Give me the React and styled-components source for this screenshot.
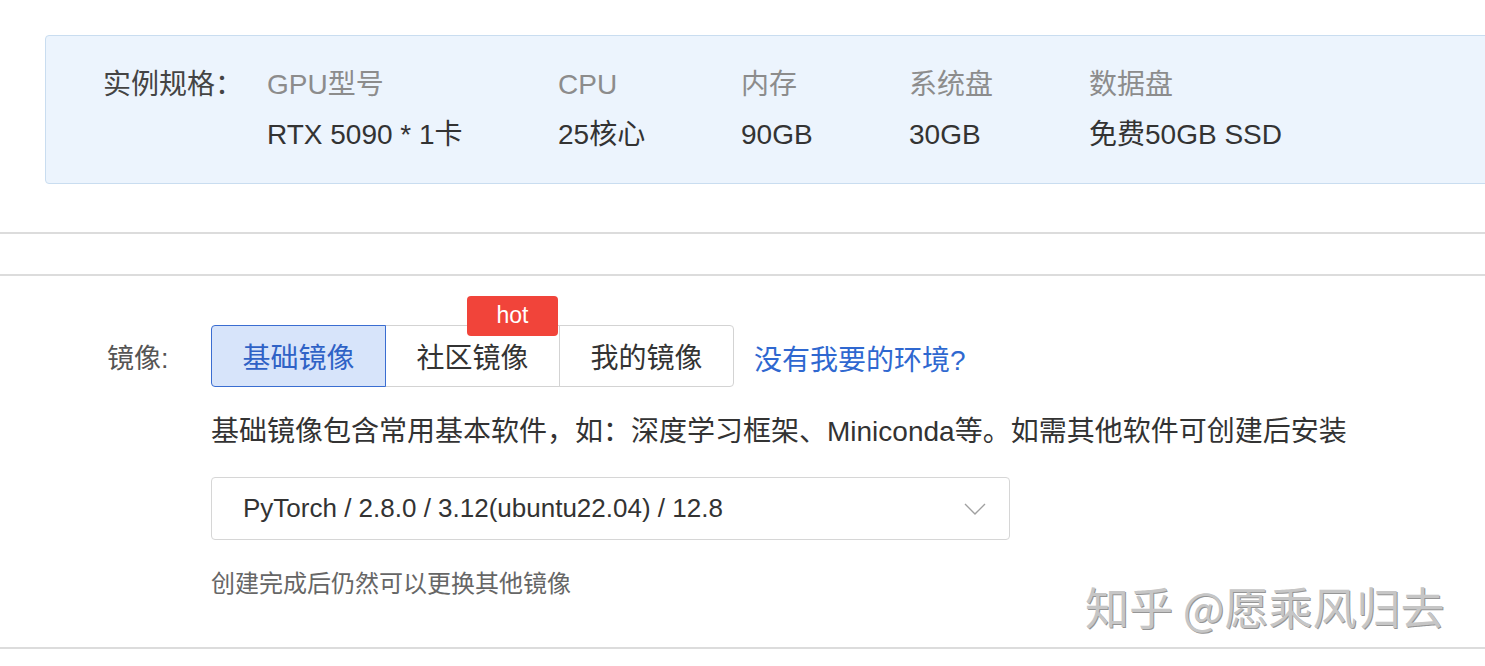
import React from "react";
import styled, { createGlobalStyle } from "styled-components";

const Global = createGlobalStyle`
  html, body { margin: 0; padding: 0; background: #fff; }
  body { font-family: "Liberation Sans", "Noto Sans CJK SC", sans-serif; overflow: hidden; }
`;

const Page = styled.div`
  position: relative;
  width: 1485px;
  height: 666px;
  overflow: hidden;
  padding-top: 35px;
  box-sizing: border-box;
`;

const SpecBox = styled.div`
  margin-left: 45px;
  width: 1500px;
  box-sizing: border-box;
  background: #ecf4fd;
  border: 1px solid #c9ddf0;
  border-radius: 4px;
  padding: 29px 0 28px 57px;
  display: grid;
  grid-template-columns: 164px 291px 183px 168px 180px auto;
  grid-auto-rows: 40px;
  row-gap: 10px;
  font-size: 28px;
  line-height: 40px;
`;

const SpecLabel = styled.div`
  color: #444;
`;

const SpecHead = styled.div`
  color: #8c8c8c;
`;

const SpecValue = styled.div`
  color: #333;
`;

const Divider = styled.div`
  height: 2px;
  background: #dcdcdc;
  margin-top: ${(p) => p.$top}px;
`;

const ImageSection = styled.div`
  padding-top: 49px;
  display: grid;
  grid-template-columns: 107px 104px auto;
`;

const ImageLabel = styled.div`
  grid-column: 2;
  height: 62px;
  display: flex;
  align-items: center;
  font-size: 27px;
  color: #555;
`;

const Content = styled.div`
  grid-column: 3;
  display: flex;
  flex-direction: column;
`;

const TabRow = styled.div`
  display: flex;
  align-items: center;
  height: 62px;
`;

const Tab = styled.div`
  position: relative;
  width: 175px;
  height: 62px;
  box-sizing: border-box;
  display: flex;
  align-items: center;
  justify-content: center;
  font-size: 28px;
  border: 1px solid ${(p) => (p.$active ? "#3a6dd1" : "#d3d3d3")};
  background: ${(p) => (p.$active ? "#d7e4fa" : "#fff")};
  color: ${(p) => (p.$active ? "#2f62c6" : "#333")};
  z-index: ${(p) => (p.$active ? 1 : 0)};
  margin-left: ${(p) => (p.$first ? 0 : -1)}px;
  border-radius: ${(p) => p.$radius};
`;

const HotBadge = styled.div`
  position: absolute;
  top: -30px;
  right: 1px;
  width: 91px;
  height: 40px;
  background: #f1443a;
  border-radius: 4px;
  color: #fff;
  font-size: 23px;
  line-height: 38px;
  text-align: center;
  z-index: 2;
`;

const HelpLink = styled.a`
  margin-left: 20px;
  font-size: 28px;
  color: #2f68d0;
  text-decoration: none;
  padding-top: 4px;
`;

const Description = styled.div`
  margin-top: 25px;
  font-size: 28px;
  line-height: 40px;
  color: #333;
  white-space: nowrap;
`;

const Select = styled.div`
  margin-top: 25px;
  width: 799px;
  height: 63px;
  box-sizing: border-box;
  border: 1px solid #d6d6d6;
  border-radius: 4px;
  display: flex;
  align-items: center;
  justify-content: space-between;
  padding: 0 23px 0 31px;
  font-size: 26px;
  color: #333;
`;

const Hint = styled.div`
  margin-top: 27px;
  font-size: 24px;
  line-height: 34px;
  color: #666;
`;

const Watermark = styled.div`
  position: absolute;
  left: 1085px;
  top: 580px;
  font-size: 44px;
  line-height: 52px;
  color: #c6c6c6;
  text-shadow: 1px 1px 0 #959595;
  font-family: "Noto Sans CJK SC", sans-serif;
  white-space: nowrap;
`;

const Chevron = () => (
  <svg width="22" height="12" viewBox="0 0 22 12" fill="none">
    <polyline points="1,1 11,11 21,1" stroke="#a0a0a0" strokeWidth="1.4" />
  </svg>
);

export default function App() {
  return (
    <Page>
      <Global />
      <SpecBox>
        <SpecLabel>实例规格：</SpecLabel>
        <SpecHead>GPU型号</SpecHead>
        <SpecHead>CPU</SpecHead>
        <SpecHead>内存</SpecHead>
        <SpecHead>系统盘</SpecHead>
        <SpecHead>数据盘</SpecHead>
        <div />
        <SpecValue>RTX 5090 * 1卡</SpecValue>
        <SpecValue>25核心</SpecValue>
        <SpecValue>90GB</SpecValue>
        <SpecValue>30GB</SpecValue>
        <SpecValue>免费50GB SSD</SpecValue>
      </SpecBox>
      <Divider $top={48} />
      <Divider $top={40} />
      <ImageSection>
        <ImageLabel>镜像:</ImageLabel>
        <Content>
          <TabRow>
            <Tab $active $first $radius="4px 0 0 4px">基础镜像</Tab>
            <Tab $radius="0">
              社区镜像
              <HotBadge>hot</HotBadge>
            </Tab>
            <Tab $radius="0 4px 4px 0">我的镜像</Tab>
            <HelpLink>没有我要的环境?</HelpLink>
          </TabRow>
          <Description>
            基础镜像包含常用基本软件，如：深度学习框架、Miniconda等。如需其他软件可创建后安装
          </Description>
          <Select>
            <span>PyTorch / 2.8.0 / 3.12(ubuntu22.04) / 12.8</span>
            <Chevron />
          </Select>
          <Hint>创建完成后仍然可以更换其他镜像</Hint>
        </Content>
      </ImageSection>
      <Divider $top={46} />
      <Watermark>知乎 @愿乘风归去</Watermark>
    </Page>
  );
}
